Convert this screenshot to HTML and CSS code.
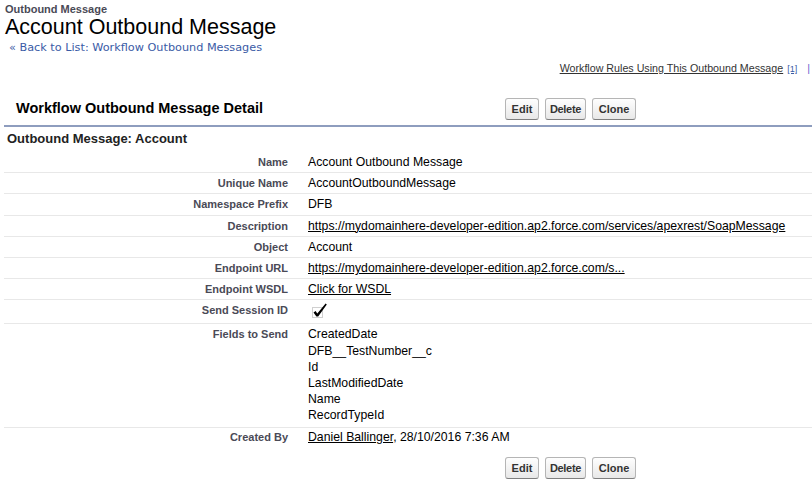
FILE: index.html
```html
<!DOCTYPE html>
<html>
<head>
<meta charset="utf-8">
<link rel="stylesheet" href="styles.css">
</head>
<body>
<div class="page-header">
  <div class="page-type">Outbound Message</div>
  <h1 class="page-title">Account Outbound Message</h1>
  <div class="back"><a href="#">« Back to List: Workflow Outbound Messages</a></div>
</div>
<div class="related">
  <a class="related-link" href="#">Workflow Rules Using This Outbound Message</a><span class="count">[1]</span><span class="pipe">|</span>
</div>
<div class="detail">
  <div class="pb-header">
    <h2 class="pb-title">Workflow Outbound Message Detail</h2>
    <div class="buttons">
      <button class="btn btn-edit">Edit</button>
      <button class="btn btn-delete">Delete</button>
      <button class="btn btn-clone">Clone</button>
    </div>
  </div>
  <h3 class="sub-header">Outbound Message: Account</h3>
  <div class="rows">
    <div class="row first"><div class="label">Name</div><div class="value">Account Outbound Message</div></div>
    <div class="row"><div class="label">Unique Name</div><div class="value">AccountOutboundMessage</div></div>
    <div class="row"><div class="label">Namespace Prefix</div><div class="value">DFB</div></div>
    <div class="row"><div class="label">Description</div><div class="value"><a href="#">https://mydomainhere-developer-edition.ap2.force.com/services/apexrest/SoapMessage</a></div></div>
    <div class="row"><div class="label">Object</div><div class="value">Account</div></div>
    <div class="row"><div class="label">Endpoint URL</div><div class="value"><a href="#">https://mydomainhere-developer-edition.ap2.force.com/s...</a></div></div>
    <div class="row"><div class="label">Endpoint WSDL</div><div class="value"><a href="#">Click for WSDL</a></div></div>
    <div class="row check-row"><div class="label">Send Session ID</div><div class="value">
      <svg class="checkbox" width="22" height="17" viewBox="0 0 22 17">
        <rect x="4.5" y="5.5" width="10" height="10" fill="none" stroke="#a0a0a0" stroke-width="1" stroke-dasharray="1 1"/>
        <path d="M5.5 10.5 L7.6 9 L9.3 11.6 L17.6 1.5 L18.8 2.4 L10.2 14.5 L8.4 14.5 Z" fill="#000"/>
      </svg>
    </div></div>
    <div class="row fields"><div class="label">Fields to Send</div><div class="value">CreatedDate<br>DFB__TestNumber__c<br>Id<br>LastModifiedDate<br>Name<br>RecordTypeId</div></div>
    <div class="row last"><div class="label">Created By</div><div class="value"><a href="#">Daniel Ballinger</a>, 28/10/2016 7:36 AM</div></div>
  </div>
  <div class="pb-footer">
    <div class="pb-spacer"></div>
    <div class="buttons">
      <button class="btn btn-edit">Edit</button>
      <button class="btn btn-delete">Delete</button>
      <button class="btn btn-clone">Clone</button>
    </div>
  </div>
</div>
</body>
</html>
```
FILE: styles.css
```css
html, body {
  margin: 0;
  padding: 0;
  background: #fff;
  font-family: "Liberation Sans", Arial, sans-serif;
  color: #000;
  overflow: hidden;
}
.page-header {
  padding: 3px 0 0 5px;
}
.page-type {
  font-size: 11px;
  font-weight: bold;
  line-height: 13px;
  color: #4a4a56;
}
.page-title {
  margin: 0;
  font-size: 21.5px;
  font-weight: normal;
  line-height: 22px;
  color: #000;
}
.back {
  margin: 3px 0 0 4px;
  font-family: "DejaVu Sans", Verdana, sans-serif;
  font-size: 11.25px;
  line-height: 14px;
}
.back a {
  color: #3a5ba6;
  text-decoration: none;
}
.related {
  display: flex;
  justify-content: flex-end;
  align-items: baseline;
  margin-top: 6px;
  padding-right: 2px;
  font-size: 10.7px;
  line-height: 14px;
}
.related-link {
  color: #333;
  text-decoration: underline;
}
.count {
  font-size: 9px;
  color: #3a5ba6;
  margin-left: 4px;
  text-decoration: underline;
}
.pipe {
  color: #6a5fd0;
  margin-left: 10px;
}
.detail {
  margin: 15px 0 0 4px;
}
.pb-header {
  display: flex;
  align-items: center;
  height: 34px;
  border-bottom: 2px solid #8e9dbe;
}
.pb-title {
  margin: 0;
  width: 489px;
  padding-left: 12px;
  font-size: 14.5px;
  font-weight: bold;
  color: #000;
  flex: none;
}
.buttons {
  display: flex;
  gap: 6px;
  padding-top: 1px;
}
.btn {
  height: 22px;
  padding: 0;
  font-family: "Liberation Sans", Arial, sans-serif;
  font-size: 11px;
  font-weight: bold;
  color: #333;
  background: linear-gradient(#fefefe, #e8e8e8);
  border: 1px solid #b5b5b5;
  border-bottom-color: #7f7f7f;
  border-radius: 3px;
  text-align: center;
}
.btn-edit { width: 34px; }
.btn-delete { width: 41px; letter-spacing: -0.3px; }
.btn-clone { width: 44px; }
.sub-header {
  margin: 0;
  padding: 5px 0 0 3px;
  height: 19px;
  font-size: 13px;
  font-weight: bold;
  line-height: 14px;
  color: #222;
}
.row {
  display: flex;
  border-bottom: 1px solid #e8e8e8;
}
.label {
  width: 284px;
  flex: none;
  padding: 2px 2px 2px 0;
  text-align: right;
  font-size: 11px;
  font-weight: bold;
  line-height: 16.2px;
  color: #4a4a56;
}
.value {
  padding: 2px 0 2px 18px;
  font-size: 12.25px;
  line-height: 16.2px;
  color: #000;
}
.value a {
  color: #000;
  text-decoration: underline;
}
.row.first .label,
.row.first .value {
  padding-top: 3px;
}
.check-row .label,
.check-row .value {
  padding-top: 2px;
  padding-bottom: 4px;
}
.checkbox {
  display: block;
}
.fields .value {
  padding-bottom: 3px;
}
.row.last {
  border-bottom: none;
}
.row.last .label,
.row.last .value {
  padding-top: 1px;
}
.pb-footer {
  display: flex;
  margin-top: 9px;
}
.pb-spacer {
  width: 501px;
  flex: none;
}
```
